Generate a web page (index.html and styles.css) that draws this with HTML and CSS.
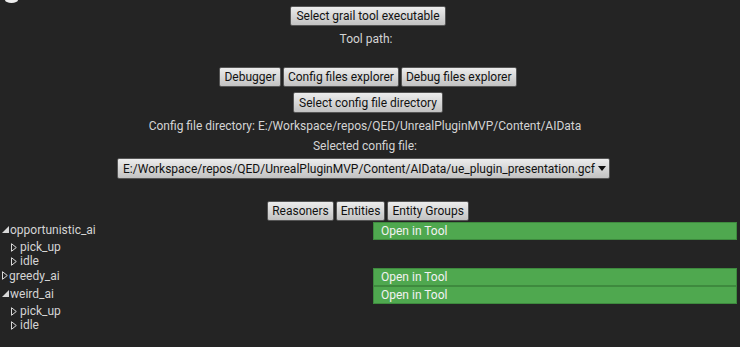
FILE: index.html
```html
<!DOCTYPE html>
<html lang="en">
<head>
    <meta charset="UTF-8">
    <meta name="viewport" content="width=device-width, initial-scale=1.0">
    <title>Grail Tool</title>
    <link rel="stylesheet" href="styles.css">
</head>
<body>

    <div class="top-mark"></div>

    <div class="settings">
        <button class="ui-button first">Select grail tool executable</button>
        <div class="label tool-path">Tool path:</div>

        <div class="button-row tools">
            <button class="ui-button">Debugger</button>
            <button class="ui-button">Config files explorer</button>
            <button class="ui-button">Debug files explorer</button>
        </div>
        <button class="ui-button config-dir">Select config file directory</button>

        <div class="label dir-label">Config file directory: E:/Workspace/repos/QED/UnrealPluginMVP/Content/AIData</div>
        <div class="label">Selected config file:</div>

        <div class="dropdown">
            <span>E:/Workspace/repos/QED/UnrealPluginMVP/Content/AIData/ue_plugin_presentation.gcf</span>
            <svg class="caret" width="8" height="5" viewBox="0 0 8 5"><path d="M0 0H8L4 5Z" fill="#111"/></svg>
        </div>

        <div class="button-row tabs">
            <button class="ui-button">Reasoners</button>
            <button class="ui-button">Entities</button>
            <button class="ui-button">Entity Groups</button>
        </div>
    </div>

    <div class="tree">
        <div class="ai-row">
            <div class="node">
                <svg class="arrow open" width="7" height="7" viewBox="0 0 7 7"><path d="M7 0V7H0Z" fill="#d8d8d8"/></svg>
                <span>opportunistic_ai</span>
            </div>
            <button class="open-tool">Open in Tool</button>
        </div>
        <div class="child">
            <svg class="arrow" width="6" height="9" viewBox="0 0 6 9"><path d="M0.5 0.7V8.3L5.3 4.5Z" fill="none" stroke="#d8d8d8" stroke-width="1"/></svg>
            <span>pick_up</span>
        </div>
        <div class="child">
            <svg class="arrow" width="6" height="9" viewBox="0 0 6 9"><path d="M0.5 0.7V8.3L5.3 4.5Z" fill="none" stroke="#d8d8d8" stroke-width="1"/></svg>
            <span>idle</span>
        </div>

        <div class="ai-row">
            <div class="node">
                <svg class="arrow" width="6" height="9" viewBox="0 0 6 9"><path d="M0.5 0.7V8.3L5.3 4.5Z" fill="none" stroke="#d8d8d8" stroke-width="1"/></svg>
                <span>greedy_ai</span>
            </div>
            <button class="open-tool">Open in Tool</button>
        </div>

        <div class="ai-row">
            <div class="node">
                <svg class="arrow open" width="7" height="7" viewBox="0 0 7 7"><path d="M7 0V7H0Z" fill="#d8d8d8"/></svg>
                <span>weird_ai</span>
            </div>
            <button class="open-tool">Open in Tool</button>
        </div>
        <div class="child">
            <svg class="arrow" width="6" height="9" viewBox="0 0 6 9"><path d="M0.5 0.7V8.3L5.3 4.5Z" fill="none" stroke="#d8d8d8" stroke-width="1"/></svg>
            <span>pick_up</span>
        </div>
        <div class="child">
            <svg class="arrow" width="6" height="9" viewBox="0 0 6 9"><path d="M0.5 0.7V8.3L5.3 4.5Z" fill="none" stroke="#d8d8d8" stroke-width="1"/></svg>
            <span>idle</span>
        </div>
    </div>

</body>
</html>
```

FILE: styles.css
```css
body {
    margin: 0;
    height: 347px;
    overflow: hidden;
    font-family: Roboto, "Liberation Sans", sans-serif;
    font-size: 12px;
    color: #d4d4d4;
    background-color: #242424;
}

.top-mark {
    position: absolute;
    left: 5px;
    top: -3px;
    width: 13px;
    height: 6px;
    border-radius: 50%;
    background-color: #eee;
}

.settings {
    display: flex;
    flex-direction: column;
    align-items: center;
    padding-right: 4px;
}

.ui-button {
    font-family: inherit;
    font-size: 12px;
    color: #111;
    height: 20px;
    padding: 0 5px;
    border: 1px solid #555;
    border-radius: 2px;
    background: linear-gradient(#ececec, #c2c2c2);
    cursor: pointer;
}
.ui-button.first { margin-top: 6px; }
.button-row .ui-button { padding: 0 4px; }

.label {
    height: 14px;
    line-height: 14px;
    margin-right: 6px;
}
.tool-path { margin-top: 6px; margin-right: 4px; }

.button-row {
    display: flex;
    gap: 2px;
}
.tools { margin-top: 21px; }
.config-dir { margin-top: 5px; height: 21px; }
.dir-label { margin-top: 6px; margin-bottom: 6px; }

.dropdown {
    display: flex;
    align-items: center;
    gap: 2px;
    margin-top: 5px;
    margin-right: 9px;
    width: 493px;
    height: 21px;
    box-sizing: border-box;
    padding: 0 3px 0 5px;
    color: #111;
    border: 1px solid #555;
    border-radius: 2px;
    background: linear-gradient(#ececec, #c2c2c2);
}
.dropdown span { flex: 1; }

.tabs { margin-top: 22px; }

.tree {
    margin-top: 1px;
}
.ai-row {
    display: grid;
    grid-template-columns: 373px 1fr;
    height: 18px;
    padding-right: 3px;
}
.node {
    display: flex;
    align-items: center;
    gap: 1px;
    padding-left: 2px;
    padding-bottom: 3px;
}
.child {
    display: flex;
    align-items: center;
    gap: 3px;
    height: 14px;
    padding-left: 11px;
}

.open-tool {
    font-family: inherit;
    font-size: 12px;
    text-align: left;
    color: #f2f2f2;
    height: 18px;
    padding: 0 7px;
    border: 1px solid #3e8a3e;
    background-color: #4fa84f;
}
```
